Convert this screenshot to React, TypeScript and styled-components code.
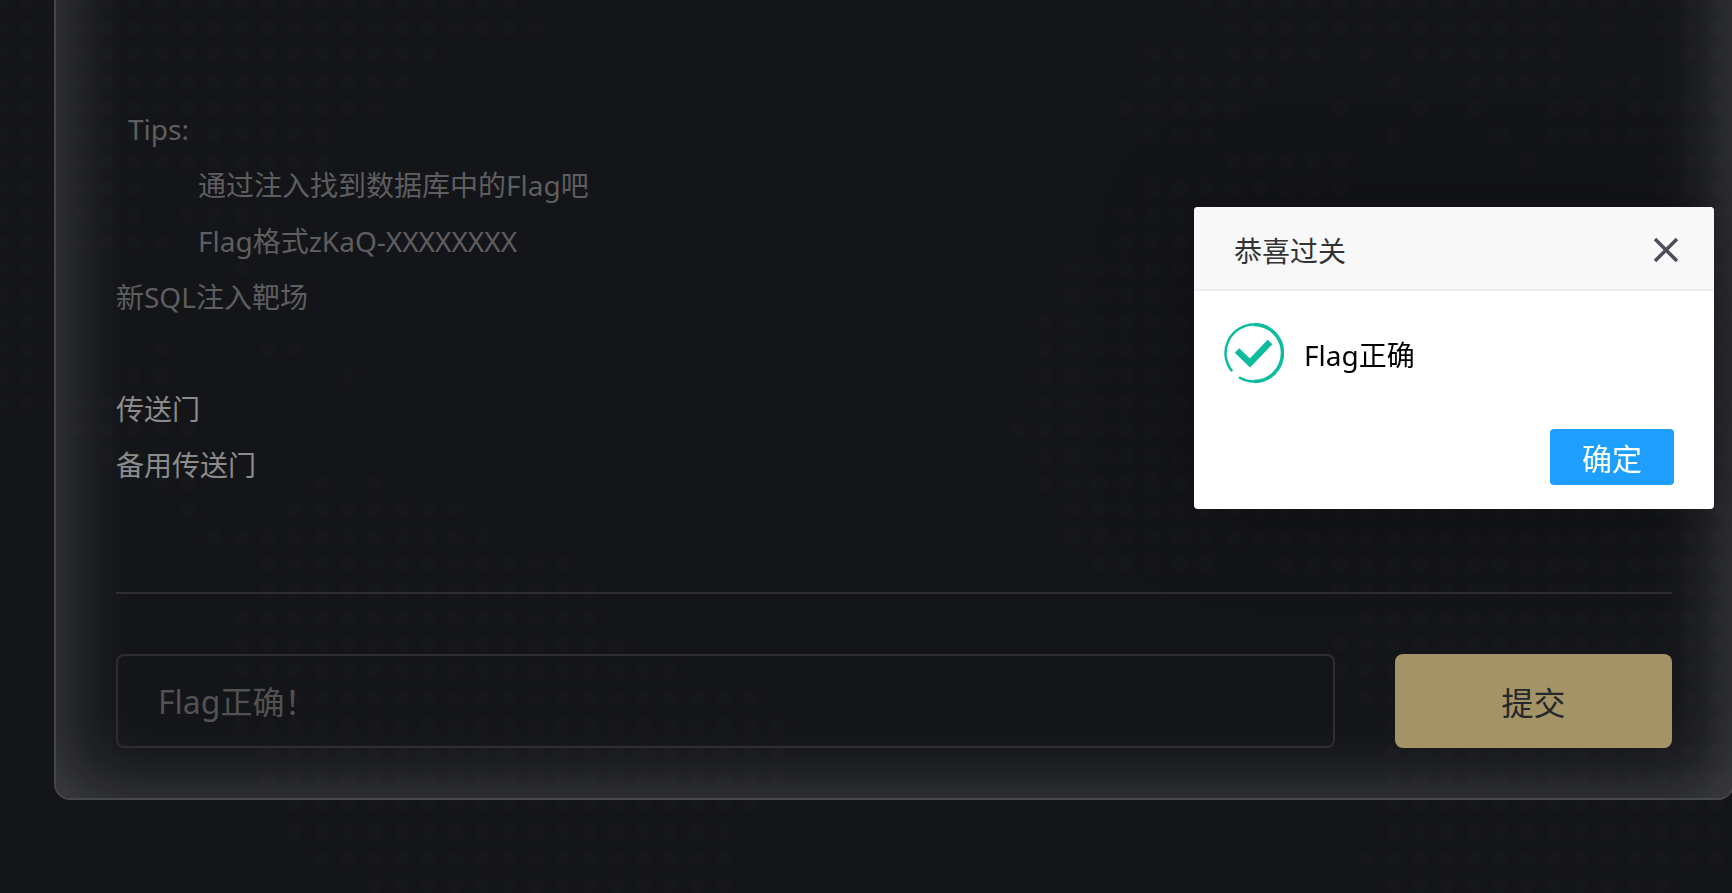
import React, { useState } from "react";
import styled, { createGlobalStyle } from "styled-components";

const FONT = '"Noto Sans", "Noto Sans CJK SC", sans-serif';

const GlobalStyle = createGlobalStyle`
  *, *::before, *::after { box-sizing: border-box; }
  body {
    margin: 0;
    background: #141519;
    font-family: ${FONT};
  }
  button, input { font-family: inherit; }
`;

const Page = styled.div`
  position: relative;
  min-height: 100vh;
  overflow: hidden;
  background: #141519;
`;

const Backdrop = styled.svg`
  position: absolute;
  inset: 0;
  width: 100%;
  height: 100%;
`;

const Panel = styled.main`
  position: relative;
  margin: -100px -2px 92px 54px;
  padding: 199px 60px 50px;
  border: 2px solid #464747;
  border-radius: 16px;
  box-shadow: inset 0 0 80px rgba(255, 255, 255, 0.22);
`;

const Tips = styled.section`
  padding-bottom: 99px;
  border-bottom: 2px solid #2e2e2f;
  color: #5e5e5f;
  font-size: 28px;
  line-height: 56px;
`;

const Line = styled.p<{ $indent?: number }>`
  margin: 0;
  padding-left: ${({ $indent = 0 }) => $indent}px;
`;

const Portals = styled.nav`
  display: flex;
  flex-direction: column;
  align-items: flex-start;
  margin-top: 56px;
`;

const PortalLink = styled.a`
  color: #8b8b8c;
  text-decoration: none;
`;

const FlagForm = styled.form`
  display: flex;
  gap: 60px;
  margin-top: 60px;
`;

const FlagInput = styled.input`
  flex: 1;
  min-width: 0;
  height: 94px;
  padding: 0 40px;
  border: 2px solid #2e2e2f;
  border-radius: 8px;
  outline: none;
  background: transparent;
  color: #8b8b8c;
  font-size: 32px;
  &::placeholder { color: #525253; opacity: 1; }
`;

const SubmitButton = styled.button`
  flex: 0 0 277px;
  border: 0;
  border-radius: 8px;
  background: #a49367;
  color: #25272a;
  font-size: 32px;
`;

const Dialog = styled.div`
  position: fixed;
  top: 207px;
  right: 18px;
  width: 520px;
  border-radius: 4px;
  background: #fff;
  box-shadow: 2px 2px 100px rgba(0, 0, 0, 0.3);
`;

const DialogHeader = styled.header`
  display: flex;
  align-items: center;
  justify-content: space-between;
  height: 84px;
  padding: 4px 32px 0 40px;
  border-bottom: 2px solid #eee;
  border-radius: 4px 4px 0 0;
  background: #f8f8f8;
`;

const DialogTitle = styled.h2`
  margin: 0;
  color: #333;
  font-size: 28px;
  font-weight: 400;
`;

const CloseButton = styled.button`
  display: flex;
  padding: 0;
  border: 0;
  background: none;
`;

const DialogBody = styled.div`
  display: flex;
  align-items: center;
  gap: 20px;
  padding: 32px 30px 46px;
`;

const Message = styled.p`
  margin: 0;
  padding-top: 4px;
  color: #000;
  font-size: 28px;
  line-height: 56px;
`;

const DialogFooter = styled.footer`
  display: flex;
  justify-content: flex-end;
  padding: 0 40px 24px;
`;

const ConfirmButton = styled.button`
  width: 124px;
  height: 56px;
  padding: 4px 0 0;
  border: 0;
  border-radius: 4px;
  background: #1e9fff;
  color: #fff;
  font-size: 30px;
  line-height: 52px;
`;

const GRID = 26.8;

/* Each row lists [first, last] column spans of the dotted world map. */
const MAP_ROWS: number[][][] = [
  [[0, 19], [45, 64]],
  [[0, 20], [46, 58], [60, 60], [62, 64]],
  [[0, 16], [43, 44], [46, 49], [51, 51], [53, 58], [63, 64]],
  [[0, 15], [43, 47], [52, 52], [55, 58], [60, 61], [64, 64]],
  [[0, 14], [42, 46], [50, 50], [53, 53], [55, 55], [58, 64]],
  [[0, 12], [43, 45], [52, 52], [56, 56], [58, 64]],
  [[0, 12], [46, 50], [57, 57], [62, 64]],
  [[0, 5], [43, 50], [62, 64]],
  [[0, 5], [7, 10], [42, 64]],
  [[0, 6], [42, 64]],
  [[0, 2], [9, 9], [40, 64]],
  [[0, 1], [40, 64]],
  [[0, 1], [39, 64]],
  [[0, 1], [6, 6], [10, 11], [39, 64]],
  [[0, 2], [5, 6], [13, 13], [39, 64]],
  [[0, 5], [39, 64]],
  [[3, 7], [38, 64]],
  [[4, 5], [39, 64]],
  [[6, 7], [12, 12], [14, 14], [39, 64]],
  [[7, 7], [11, 17], [40, 64]],
  [[8, 18], [40, 64]],
  [[10, 21], [41, 45], [48, 64]],
  [[10, 22], [50, 64]],
  [[9, 22], [51, 64]],
  [[9, 23], [50, 64]],
  [[9, 25], [50, 64]],
  [[9, 28], [51, 64]],
  [[9, 29], [52, 64]],
  [[10, 29], [52, 64]],
  [[10, 29], [52, 64]],
  [[11, 28], [52, 64]],
  [[11, 27], [52, 64]],
  [[12, 27], [51, 64]],
  [[14, 27], [52, 62]],
];

function DottedMap() {
  return (
    <Backdrop aria-hidden="true">
      {MAP_ROWS.flatMap((spans, row) =>
        spans.flatMap(([first, last]) =>
          Array.from({ length: last - first + 1 }, (_, i) => (
            <circle
              key={`${row}-${first + i}`}
              cx={(first + i) * GRID}
              cy={row * GRID + 1}
              r="8"
              fill="#16171a"
            />
          ))
        )
      )}
    </Backdrop>
  );
}

function CloseIcon() {
  return (
    <svg width="32" height="32" viewBox="0 0 32 32" fill="none" stroke="#4f4d5c" strokeWidth="3.500">
      <path d="M5 5 27 27M27 5 5 27" />
    </svg>
  );
}

function SuccessIcon() {
  return (
    <svg width="60" height="60" viewBox="0 0 60 60" fill="none" stroke="#0bbc9e">
      <path d="M15 54.200A28.500 28.500 0 0 0 30 58.500" strokeWidth="2.500" />
      <path d="M30 58.500A28.500 28.500 0 0 0 30 1.500" strokeWidth="3.500" />
      <path d="M30 1.500A28.500 28.500 0 0 0 8.200 48.300" strokeWidth="2.500" />
      <path d="M13 27.500 26 40 46 19" strokeWidth="6.500" />
    </svg>
  );
}

export default function App() {
  const [flag, setFlag] = useState("");
  const [open, setOpen] = useState(true);

  return (
    <>
      <GlobalStyle />
      <Page>
        <DottedMap />
        <Panel>
          <Tips>
            <Line $indent={12}>Tips:</Line>
            <Line $indent={82}>通过注入找到数据库中的Flag吧</Line>
            <Line $indent={82}>Flag格式zKaQ-XXXXXXXX</Line>
            <Line>新SQL注入靶场</Line>
            <Portals>
              <PortalLink href="#portal">传送门</PortalLink>
              <PortalLink href="#backup-portal">备用传送门</PortalLink>
            </Portals>
          </Tips>
          <FlagForm onSubmit={(event) => event.preventDefault()}>
            <FlagInput
              aria-label="Flag"
              placeholder="Flag正确！"
              value={flag}
              onChange={(event) => setFlag(event.target.value)}
            />
            <SubmitButton type="submit">提交</SubmitButton>
          </FlagForm>
        </Panel>
      </Page>
      {open && (
        <Dialog role="dialog" aria-labelledby="dialog-title">
          <DialogHeader>
            <DialogTitle id="dialog-title">恭喜过关</DialogTitle>
            <CloseButton type="button" aria-label="关闭" onClick={() => setOpen(false)}>
              <CloseIcon />
            </CloseButton>
          </DialogHeader>
          <DialogBody>
            <SuccessIcon />
            <Message>Flag正确</Message>
          </DialogBody>
          <DialogFooter>
            <ConfirmButton type="button" onClick={() => setOpen(false)}>
              确定
            </ConfirmButton>
          </DialogFooter>
        </Dialog>
      )}
    </>
  );
}
